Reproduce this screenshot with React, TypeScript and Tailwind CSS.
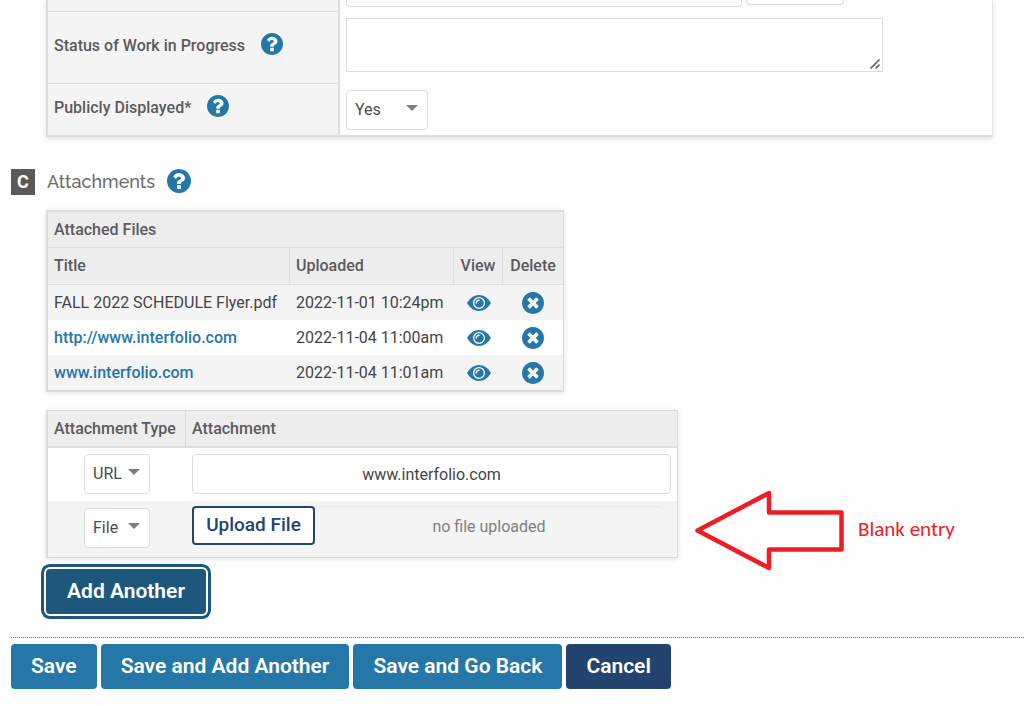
import { ReactNode } from "react";

type AttachedFile = { title: string; uploaded: string; link: boolean };

const files: AttachedFile[] = [
  { title: "FALL 2022 SCHEDULE Flyer.pdf", uploaded: "2022-11-01 10:24pm", link: false },
  { title: "http://www.interfolio.com", uploaded: "2022-11-04 11:00am", link: true },
  { title: "www.interfolio.com", uploaded: "2022-11-04 11:01am", link: true },
];

function QuestionIcon({ className }: { className: string }) {
  return (
    <svg viewBox="128 128 1536 1536" fill="currentColor" className={className} aria-hidden="true">
      <path d="M1024 1376v-192q0-14-9-23t-23-9h-192q-14 0-23 9t-9 23v192q0 14 9 23t23 9h192q14 0 23-9t9-23zm256-672q0-88-55.500-163t-138.500-116-170-41q-243 0-371 213-15 24 8 42l132 100q7 6 19 6 16 0 25-12 53-68 86-92 34-24 86-24 48 0 85.500 26t37.500 59q0 38-20 61t-68 45q-63 28-115.500 86.500t-52.500 125.500v36q0 14 9 23t23 9h192q14 0 23-9t9-23q0-19 21.500-49.500t54.500-49.500q32-18 49-28.500t46-35 44.500-48 28-60.500 12.500-81zm384 192q0 209-103 385.500t-279.500 279.500-385.500 103-385.500-103-279.500-279.500-103-385.500 103-385.500 279.500-279.500 385.500-103 385.500 103 279.500 279.500 103 385.500z" />
    </svg>
  );
}

function RemoveIcon() {
  return (
    <svg viewBox="128 128 1536 1536" fill="currentColor" className="size-[22px]" aria-hidden="true">
      <path d="M1277 1122q0-26-19-45l-181-181 181-181q19-19 19-45 0-27-19-46l-90-90q-19-19-46-19-26 0-45 19l-181 181-181-181q-19-19-45-19-27 0-46 19l-90 90q-19 19-19 46 0 26 19 45l181 181-181 181q-19 19-19 45 0 27 19 46l90 90q19 19 46 19 26 0 45-19l181-181 181 181q19 19 45 19 27 0 46-19l90-90q19-19 19-46zm387-226q0 209-103 385.500t-279.500 279.500-385.500 103-385.500-103-279.500-279.500-103-385.500 103-385.500 279.500-279.500 385.500-103 385.500 103 279.500 279.500 103 385.500z" />
    </svg>
  );
}

function EyeIcon() {
  return (
    <svg viewBox="0 0 24 16" className="h-4 w-6" aria-hidden="true">
      <path d="M0 8C3 2.800 7.300 0 12 0s9 2.800 12 8c-3 5.200-7.300 8-12 8S3 13.200 0 8z" fill="currentColor" />
      <circle cx="12" cy="8" r="5.400" fill="none" stroke="white" strokeWidth="1.300" />
      <path d="M9.300 8A2.700 2.700 0 0 1 12 5.300" fill="none" stroke="white" strokeWidth="1.500" strokeLinecap="round" />
    </svg>
  );
}

function HelpButton({ label, large = false }: { label: string; large?: boolean }) {
  return (
    <button type="button" aria-label={label} className="shrink-0 pb-[3px] text-[#2477a7]">
      <QuestionIcon className={large ? "size-6" : "size-[22px]"} />
    </button>
  );
}

function Select({
  id,
  label,
  options,
  className,
}: {
  id: string;
  label?: string;
  options: string[];
  className: string;
}) {
  return (
    <div className={`relative inline-block h-10 ${className}`}>
      <select
        id={id}
        aria-label={label}
        className="h-10 w-full appearance-none rounded border border-[#dcdcdc] bg-white pl-2 text-base text-[#4a4a4a]"
      >
        {options.map((o) => (
          <option key={o}>{o}</option>
        ))}
      </select>
      <svg
        viewBox="0 0 12 6"
        className="pointer-events-none absolute top-[15px] right-[10px] h-[6px] w-3 fill-[#7d7d7d]"
        aria-hidden="true"
      >
        <path d="M0 0h12L6 6z" />
      </svg>
    </div>
  );
}

function PrimaryButton({ children, dark = false }: { children: ReactNode; dark?: boolean }) {
  return (
    <button
      type="button"
      className={`h-[45px] rounded px-5 text-[21px] font-semibold text-white ${dark ? "bg-[#22446f]" : "bg-[#2477a7]"}`}
    >
      {children}
    </button>
  );
}

function DetailsForm() {
  return (
    <div className="mr-[31px] ml-[46px] border-r border-b-2 border-l-2 border-[#dcdcdc] border-r-[#e2e2e2] shadow-[0_2px_5px_rgba(0,0,0,0.1)]">
      <div className="grid grid-cols-[292px_1fr]">
        <div className="h-3 border-r-2 border-b border-[#dedede] bg-[#f4f4f4]" />
        <div className="flex items-start gap-1 pl-[6px]">
          <div className="h-[7px] w-[396px] rounded-b border border-t-0 border-[#dcdcdc]" />
          <div className="h-[5px] w-[98px] rounded-b border border-t-0 border-[#dcdcdc]" />
        </div>
        <div className="flex h-[72px] items-center gap-4 border-r-2 border-b border-[#dedede] bg-[#f4f4f4] pb-1 pl-[6px]">
          <label htmlFor="status" className="font-medium text-[#5c5a5c]">
            Status of Work in Progress
          </label>
          <HelpButton label="Help with Status of Work in Progress" />
        </div>
        <div className="pt-[6px] pl-[6px]">
          <div className="relative w-[537px]">
            <textarea
              id="status"
              className="block h-[54px] w-full resize-none border border-[#dcdcdc] bg-white p-1"
            />
            <svg
              viewBox="0 0 10 10"
              className="pointer-events-none absolute right-[3px] bottom-[3px] size-[10px]"
              aria-hidden="true"
            >
              <path d="M0.500 9.500 9.500 0.500M5.500 9.500 9.500 5.500" stroke="#6b6b6b" strokeWidth="1.700" />
            </svg>
          </div>
        </div>
        <div className="flex h-[51px] items-center gap-4 border-r-2 border-[#dedede] bg-[#f4f4f4] pb-1 pl-[6px]">
          <label htmlFor="public" className="font-medium text-[#5c5a5c]">
            Publicly Displayed*
          </label>
          <HelpButton label="Help with Publicly Displayed" />
        </div>
        <div className="flex items-start pt-[6px] pl-[6px]">
          <Select id="public" options={["Yes", "No"]} className="w-[82px]" />
        </div>
      </div>
    </div>
  );
}

function FilesTable() {
  return (
    <table className="w-[518px] table-fixed border-separate border-spacing-0 border-t-2 border-r border-b-2 border-l-2 border-[#dcdcdc] text-left shadow-[0_1px_5px_rgba(0,0,0,0.12)]">
      <colgroup>
        <col className="w-[242px]" />
        <col className="w-[164px]" />
        <col className="w-[49px]" />
        <col className="w-[60px]" />
      </colgroup>
      <thead className="bg-[#ededed] text-[#5c5a5c]">
        <tr className="h-9">
          <th colSpan={4} className="border-b border-[#dedede] pl-[6px] font-medium">
            Attached Files
          </th>
        </tr>
        <tr className="h-[37px]">
          <th className="border-r border-b border-[#dedede] pl-[6px] font-medium">Title</th>
          <th className="border-r border-b border-[#dedede] pl-[6px] font-medium">Uploaded</th>
          <th className="border-r border-b border-[#dedede] text-center font-medium">View</th>
          <th className="border-b border-[#dedede] text-center font-medium">Delete</th>
        </tr>
      </thead>
      <tbody>
        {files.map((f) => (
          <tr key={f.title} className="h-[35px] whitespace-nowrap text-[#444] odd:bg-[#f4f4f4] even:bg-white">
            <td className="pl-[6px]">
              {f.link ? (
                <a href="#file" className="font-medium text-[#2477a7]">
                  {f.title}
                </a>
              ) : (
                f.title
              )}
            </td>
            <td className="pl-[6px]">{f.uploaded}</td>
            <td>
              <button type="button" aria-label={`View ${f.title}`} className="mx-auto block text-[#2477a7]">
                <EyeIcon />
              </button>
            </td>
            <td>
              <button type="button" aria-label={`Delete ${f.title}`} className="mx-auto block text-[#2477a7]">
                <RemoveIcon />
              </button>
            </td>
          </tr>
        ))}
      </tbody>
    </table>
  );
}

function NewAttachments() {
  return (
    <table className="w-[632px] shrink-0 table-fixed border-separate border-spacing-0 border-t border-r border-b border-l-2 border-[#dcdcdc] text-left shadow-[0_1px_5px_rgba(0,0,0,0.12)]">
      <colgroup>
        <col className="w-[138px]" />
        <col />
      </colgroup>
      <thead className="bg-[#ededed] text-[#5c5a5c]">
        <tr className="h-[37px]">
          <th className="border-r border-b-2 border-[#dcdcdc] pl-[6px] font-medium">Attachment Type</th>
          <th className="border-b-2 border-[#dcdcdc] pl-[6px] font-medium">Attachment</th>
        </tr>
      </thead>
      <tbody>
        <tr className="h-[53px] bg-white">
          <td className="text-center align-top">
            <Select id="type-url" label="Attachment type 1" options={["URL", "File"]} className="mt-[6px] w-[66px] text-left" />
          </td>
          <td className="px-[6px] pt-[6px] align-top">
            <input
              type="text"
              aria-label="Attachment URL"
              defaultValue="www.interfolio.com"
              className="block h-10 w-full rounded border border-[#dcdcdc] bg-white text-center text-[#444]"
            />
          </td>
        </tr>
        <tr className="h-14 bg-[#f4f4f4]">
          <td className="text-center align-top">
            <Select id="type-file" label="Attachment type 2" options={["File", "URL"]} className="mt-[7px] w-[66px] text-left" />
          </td>
          <td className="pr-[14px] pl-[6px] align-top">
            <div className="flex pt-[5px]">
              <button
                type="button"
                className="h-[39px] w-[123px] rounded border-2 border-[#22446f] bg-white text-[19px] font-medium text-[#22446f]"
              >
                Upload File
              </button>
              <input
                type="text"
                readOnly
                aria-label="Uploaded file"
                defaultValue="no file uploaded"
                className="h-10 min-w-0 flex-1 rounded border-t border-[#e9e9e9] bg-transparent text-center text-[#808080]"
              />
            </div>
          </td>
        </tr>
      </tbody>
    </table>
  );
}

function Annotation() {
  return (
    <div className="mt-20 -mb-4 ml-[17px] flex items-center gap-[14px]">
      <svg viewBox="0 0 149 81" className="h-[81px] w-[149px] shrink-0" aria-hidden="true">
        <path
          d="M2.500 40.500 74 3v19.500h72.500V59.500H74V78z"
          fill="none"
          stroke="#ee1c25"
          strokeWidth="4.500"
          strokeLinejoin="round"
        />
      </svg>
      <p className="pb-[2px] font-['Carlito','Lato',sans-serif] text-[21px] whitespace-nowrap text-[#ee1c25]">
        Blank entry
      </p>
    </div>
  );
}

export default function App() {
  return (
    <main className="min-h-screen bg-[#fefefe] font-['Roboto',sans-serif] text-base text-[#444]">
      <DetailsForm />
      <section className="mt-[31px]">
        <div className="ml-[11px] flex h-7 items-center">
          <span className="flex h-[26px] w-6 items-center justify-center bg-[#595959] text-lg font-bold text-white">C</span>
          <h2 className="mx-3 font-['Raleway','Lato',sans-serif] text-lg font-medium text-[#6b6b6b]">Attachments</h2>
          <HelpButton label="Help with Attachments" large />
        </div>
        <div className="mt-[14px] ml-[46px]">
          <FilesTable />
          <div className="mt-[18px] flex items-start">
            <NewAttachments />
            <Annotation />
          </div>
          <button
            type="button"
            className="mt-[11px] block h-[45px] w-[160px] rounded bg-[#1d587c] text-[21px] font-semibold text-white shadow-[0_0_0_2px_white,0_0_0_5px_#1d587c]"
          >
            Add Another
          </button>
        </div>
      </section>
      <footer className="mt-[23px] ml-[11px] flex gap-1 border-t border-dotted border-[#777] pt-[6px]">
        <PrimaryButton>Save</PrimaryButton>
        <PrimaryButton>Save and Add Another</PrimaryButton>
        <PrimaryButton>Save and Go Back</PrimaryButton>
        <PrimaryButton dark>Cancel</PrimaryButton>
      </footer>
    </main>
  );
}
